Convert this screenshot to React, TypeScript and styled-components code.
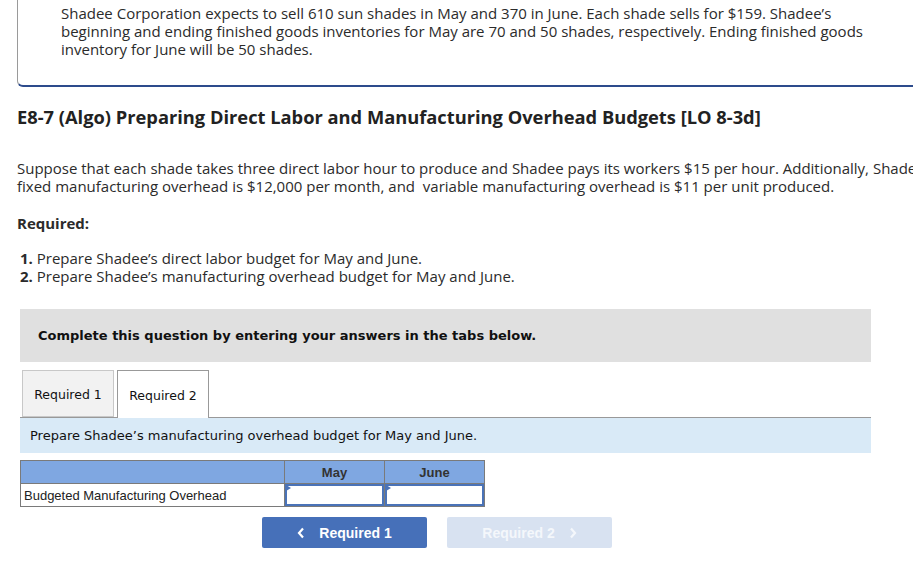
import React from "react";
import styled, { createGlobalStyle } from "styled-components";

const Global = createGlobalStyle`
  html, body { margin: 0; padding: 0; background: #fff; overflow: hidden; }
  body { font-family: "Open Sans", Lato, sans-serif; color: #2b2b2b; }
`;

const Page = styled.div`
  width: 913px;
  height: 562px;
  overflow: hidden;
  position: relative;
`;

const Inner = styled.div`
  width: 980px;
  padding-left: 17px;
`;

const IntroBox = styled.div`
  border-left: 1px solid #9a9a9a;
  border-bottom: 2px solid #2d4b8c;
  border-bottom-left-radius: 6px;
  padding: 4px 0 27px 43px;
  font-size: 15px;
  line-height: 18px;
  width: 940px;
  box-sizing: border-box;
`;

const IntroText = styled.p`
  margin: 0;
  width: 825px;
`;

const Heading = styled.h1`
  margin: 18px 0 0 0;
  font-size: 18.3px;
  line-height: 24px;
  font-weight: 700;
  color: #222;
`;

const Para = styled.p`
  margin: 30px 0 0 0;
  font-size: 15px;
  line-height: 18px;
  width: 935px;
`;

const Required = styled.div`
  margin-top: 19px;
  font-size: 15px;
  line-height: 18px;
  font-weight: 700;
`;

const List = styled.ol`
  list-style: none;
  margin: 17px 0 0 0;
  padding: 0 0 0 3px;
  font-size: 15px;
  line-height: 18px;
`;

const Num = styled.b`
  font-weight: 700;
`;

const Question = styled.div`
  font-family: Verdana, "DejaVu Sans", sans-serif;
  width: 851px;
  margin: 24px 0 0 3px;
`;

const Instruction = styled.div`
  background: #e0e0e0;
  height: 53px;
  padding-left: 18px;
  display: flex;
  align-items: center;
  font-size: 13px;
  font-weight: 700;
  color: #111;
`;

const TabBar = styled.div`
  display: flex;
  gap: 3px;
  margin-top: 8px;
  padding-left: 2px;
  border-bottom: 1px solid #999;
  height: 47px;
`;

const Tab = styled.div<{ $active?: boolean }>`
  width: 92px;
  box-sizing: border-box;
  height: ${(p) => (p.$active ? "48px" : "47px")};
  display: flex;
  align-items: center;
  justify-content: center;
  font-size: 12.5px;
  color: #111;
  background: ${(p) => (p.$active ? "#fff" : "#f2f2f2")};
  border: 1px solid ${(p) => (p.$active ? "#999" : "#c8c8c8")};
  border-bottom: ${(p) => (p.$active ? "none" : "1px solid #c8c8c8")};
  padding-top: 2px;
`;

const Prompt = styled.div`
  background: #d9eaf7;
  height: 35px;
  display: flex;
  align-items: center;
  padding-left: 10px;
  font-size: 13px;
  color: #111;
`;

const Table = styled.table`
  border-collapse: collapse;
  margin-top: 7px;
  font-family: Arial, "Liberation Sans", sans-serif;
  font-size: 13px;
`;

const HeadCell = styled.th`
  background: #7fa7e1;
  border: 1px solid #7a7a7a;
  height: 22px;
  padding: 0;
  font-weight: 700;
  color: #333;
  text-align: center;
`;

const LabelCell = styled.td`
  border: 1px solid #7a7a7a;
  width: 260px;
  height: 22px;
  padding: 0 0 0 3px;
  color: #222;
`;

const InputCell = styled.td`
  border: 1px solid #7a7a7a;
  width: 99px;
  padding: 0;
  height: 22px;
`;

const InputBox = styled.div`
  position: relative;
  box-sizing: border-box;
  height: 22px;
  border: 2px solid #4a73b8;
  background: #fff;
  &::before {
    content: "";
    position: absolute;
    left: -1px;
    top: -1px;
    border-left: 5px solid #4a73b8;
    border-top: 3px solid transparent;
    border-bottom: 3px solid transparent;
  }
`;

const NavRow = styled.div`
  display: flex;
  gap: 20px;
  margin: 10px 0 0 242px;
`;

const NavButton = styled.button<{ $disabled?: boolean }>`
  width: 165px;
  height: 31px;
  border: none;
  border-radius: 2px;
  background: ${(p) => (p.$disabled ? "#d8e2f1" : "#4670b9")};
  color: ${(p) => (p.$disabled ? "#f4f7fb" : "#fff")};
  font-family: Arial, "Liberation Sans", sans-serif;
  font-size: 14px;
  font-weight: 700;
  display: flex;
  align-items: center;
  justify-content: center;
  gap: 14px;
  padding: 0;
`;

const Chevron = ({ dir }: { dir: "left" | "right" }) => (
  <svg width="8" height="12" viewBox="0 0 8 12">
    <path
      d={dir === "left" ? "M6 1.5 L2 6 L6 10.5" : "M2 1.5 L6 6 L2 10.5"}
      fill="none"
      stroke="currentColor"
      strokeWidth="2.2"
    />
  </svg>
);

export default function App() {
  return (
    <Page>
      <Global />
      <Inner>
        <IntroBox>
          <IntroText>
            Shadee Corporation expects to sell 610 sun shades in May and 370 in June. Each shade sells for $159. Shadee’s
            beginning and ending finished goods inventories for May are 70 and 50 shades, respectively. Ending finished goods
            inventory for June will be 50 shades.
          </IntroText>
        </IntroBox>
        <Heading>E8-7 (Algo) Preparing Direct Labor and Manufacturing Overhead Budgets [LO 8-3d]</Heading>
        <Para>
          Suppose that each shade takes three direct labor hour to produce and Shadee pays its workers $15 per hour. Additionally, Shadee’s
          fixed manufacturing overhead is $12,000 per month, and &nbsp;variable manufacturing overhead is $11 per unit produced.
        </Para>
        <Required>Required:</Required>
        <List>
          <li>
            <Num>1.</Num> Prepare Shadee’s direct labor budget for May and June.
          </li>
          <li>
            <Num>2.</Num> Prepare Shadee’s manufacturing overhead budget for May and June.
          </li>
        </List>
        <Question>
          <Instruction>Complete this question by entering your answers in the tabs below.</Instruction>
          <TabBar>
            <Tab>Required 1</Tab>
            <Tab $active>Required 2</Tab>
          </TabBar>
          <Prompt>Prepare Shadee’s manufacturing overhead budget for May and June.</Prompt>
          <Table>
            <thead>
              <tr>
                <HeadCell />
                <HeadCell>May</HeadCell>
                <HeadCell>June</HeadCell>
              </tr>
            </thead>
            <tbody>
              <tr>
                <LabelCell>Budgeted Manufacturing Overhead</LabelCell>
                <InputCell>
                  <InputBox />
                </InputCell>
                <InputCell>
                  <InputBox />
                </InputCell>
              </tr>
            </tbody>
          </Table>
          <NavRow>
            <NavButton>
              <Chevron dir="left" />
              Required 1
            </NavButton>
            <NavButton $disabled>
              Required 2
              <Chevron dir="right" />
            </NavButton>
          </NavRow>
        </Question>
      </Inner>
    </Page>
  );
}
